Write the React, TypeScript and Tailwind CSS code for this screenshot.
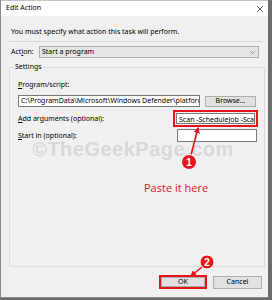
import React from "react";

const ui = { fontFamily: '"Noto Sans", "Open Sans", sans-serif' };

function TextBox({ value, className }: { value?: string; className: string }) {
  return (
    <div className={`bg-white border border-[#7a7a7a] overflow-hidden whitespace-nowrap pl-[2px] text-[7px] leading-[10px] text-black ${className}`}>
      {value}
    </div>
  );
}

function Button({ label, className }: { label: React.ReactNode; className: string }) {
  return (
    <div className={`bg-[#e1e1e1] border border-[#adadad] flex items-center justify-center text-[7px] text-black ${className}`}>
      {label}
    </div>
  );
}

function Annotations() {
  return (
    <svg className="absolute inset-0 pointer-events-none" width="272" height="300" viewBox="0 0 272 300">
      <defs>
        <marker id="head" viewBox="0 0 10 10" refX="8" refY="5" markerWidth="4" markerHeight="4" orient="auto">
          <path d="M0 0 L10 5 L0 10 z" fill="#e8141b" />
        </marker>
      </defs>
      {/* arrow 1 */}
      <line x1="191" y1="155" x2="198" y2="128" stroke="#e8141b" strokeWidth="1.6" markerEnd="url(#head)" />
      <circle cx="189" cy="162" r="7.5" fill="#e8141b" stroke="#ffffff" strokeWidth="1" />
      <text x="189" y="165.5" textAnchor="middle" fontFamily="Liberation Sans, Arial, sans-serif" fontWeight="700" fontSize="10" fill="#ffffff">1</text>
      {/* arrow 2 */}
      <line x1="202" y1="267" x2="191" y2="276" stroke="#e8141b" strokeWidth="1.6" markerEnd="url(#head)" />
      <circle cx="207" cy="262" r="7" fill="#e8141b" stroke="#ffffff" strokeWidth="1" />
      <text x="207" y="265.5" textAnchor="middle" fontFamily="Liberation Sans, Arial, sans-serif" fontWeight="700" fontSize="10" fill="#ffffff">2</text>
    </svg>
  );
}

export default function App() {
  return (
    <div className="relative w-[272px] h-[300px] bg-[#6d6d6d] overflow-hidden" style={ui}>
      <div className="w-[268px] h-[298px] bg-[#f0f0f0] border-l border-b border-[#8a8a8a] flex flex-col">
        {/* title bar */}
        <div className="h-[16px] bg-white border-t border-[#c4c4c4] flex items-center justify-between pl-[5px] pr-[4px]">
          <span className="text-[7px] text-black">Edit Action</span>
          <svg width="8" height="8" viewBox="0 0 8 8">
            <path d="M1 1 L7 7 M7 1 L1 7" stroke="#333" strokeWidth="0.8" />
          </svg>
        </div>

        <div className="flex-1 flex flex-col pl-[8px] pr-[4px]">
          <div className="mt-[11px] pl-[2px] text-[7px] leading-[10px] text-black">
            You must specify what action this task will perform.
          </div>
          <div className="mt-[4px] mr-[1px] border-t border-[#d5d5d5]" />

          {/* action row */}
          <div className="mt-[4px] flex items-center">
            <span className="w-[30px] pl-[2px] text-[7px] text-black">
              Act<u>i</u>on:
            </span>
            <div className="w-[220px] h-[12px] bg-[#e5e5e5] border border-[#adadad] flex items-center justify-between pl-[2px] pr-[3px] text-[7px] text-black">
              <span>Start a program</span>
              <svg width="5" height="3" viewBox="0 0 5 3">
                <path d="M0.3 0.3 L2.5 2.5 L4.7 0.3" fill="none" stroke="#555" strokeWidth="0.6" />
              </svg>
            </div>
          </div>

          {/* settings group */}
          <fieldset className="mt-[4px] h-[205px] border border-[#dcdcdc] pl-[8px] pr-[6px]">
            <legend className="ml-[-4px] px-[1px] text-[7px] leading-[10px] text-black">Settings</legend>

            <div className="mt-[8px] text-[7px] leading-[10px] text-black">
              <u>P</u>rogram/script:
            </div>
            <div className="mt-[5px] flex items-center gap-[5px]">
              <TextBox
                className="w-[182px] h-[12px]"
                value="C:\ProgramData\Microsoft\Windows Defender\platform\4.18.1902.2-0\MpCmdRun.exe"
              />
              <Button label="Browse..." className="w-[51px] h-[11px] mr-[2px]" />
            </div>

            <div className="mt-[3px] flex items-center justify-between">
              <span className="text-[7px] leading-[10px] text-black">
                <u>A</u>dd arguments (optional):
              </span>
              <div className="w-[85px] h-[17px] border-2 border-[#e8141b] p-[1px]">
                <TextBox className="w-full h-full leading-[11px]" value="Scan -ScheduleJob -ScanTrigger 55" />
              </div>
            </div>

            <div className="mt-[2px] flex items-center justify-between">
              <span className="text-[7px] leading-[10px] text-black">
                <u>S</u>tart in (optional):
              </span>
              <TextBox className="w-[80px] h-[13px] mr-[1px]" />
            </div>
          </fieldset>

          {/* buttons */}
          <div className="mt-[8px] flex justify-end items-start gap-[6px] mr-[2px]">
            <div className="w-[48px] h-[14px] border-2 border-[#e8141b]">
              <Button label="OK" className="w-full h-full" />
            </div>
            <Button label="Cancel" className="w-[49px] h-[13px] mt-[1px]" />
          </div>
        </div>
      </div>

      {/* watermark */}
      <div
        className="absolute left-[13px] top-[138px] w-[240px] text-center text-[20px] leading-[22px] font-bold tracking-[0.5px] text-[#d8d8d8] pointer-events-none"
        style={{ fontFamily: '"Liberation Sans", Arial, sans-serif' }}
      >
        ©TheGeekPage.com
      </div>

      <div
        className="absolute left-[144px] top-[181px] text-[11px] leading-[14px] text-[#e8141b]"
        style={{ fontFamily: '"Open Sans", sans-serif' }}
      >
        Paste it here
      </div>

      <Annotations />
    </div>
  );
}
